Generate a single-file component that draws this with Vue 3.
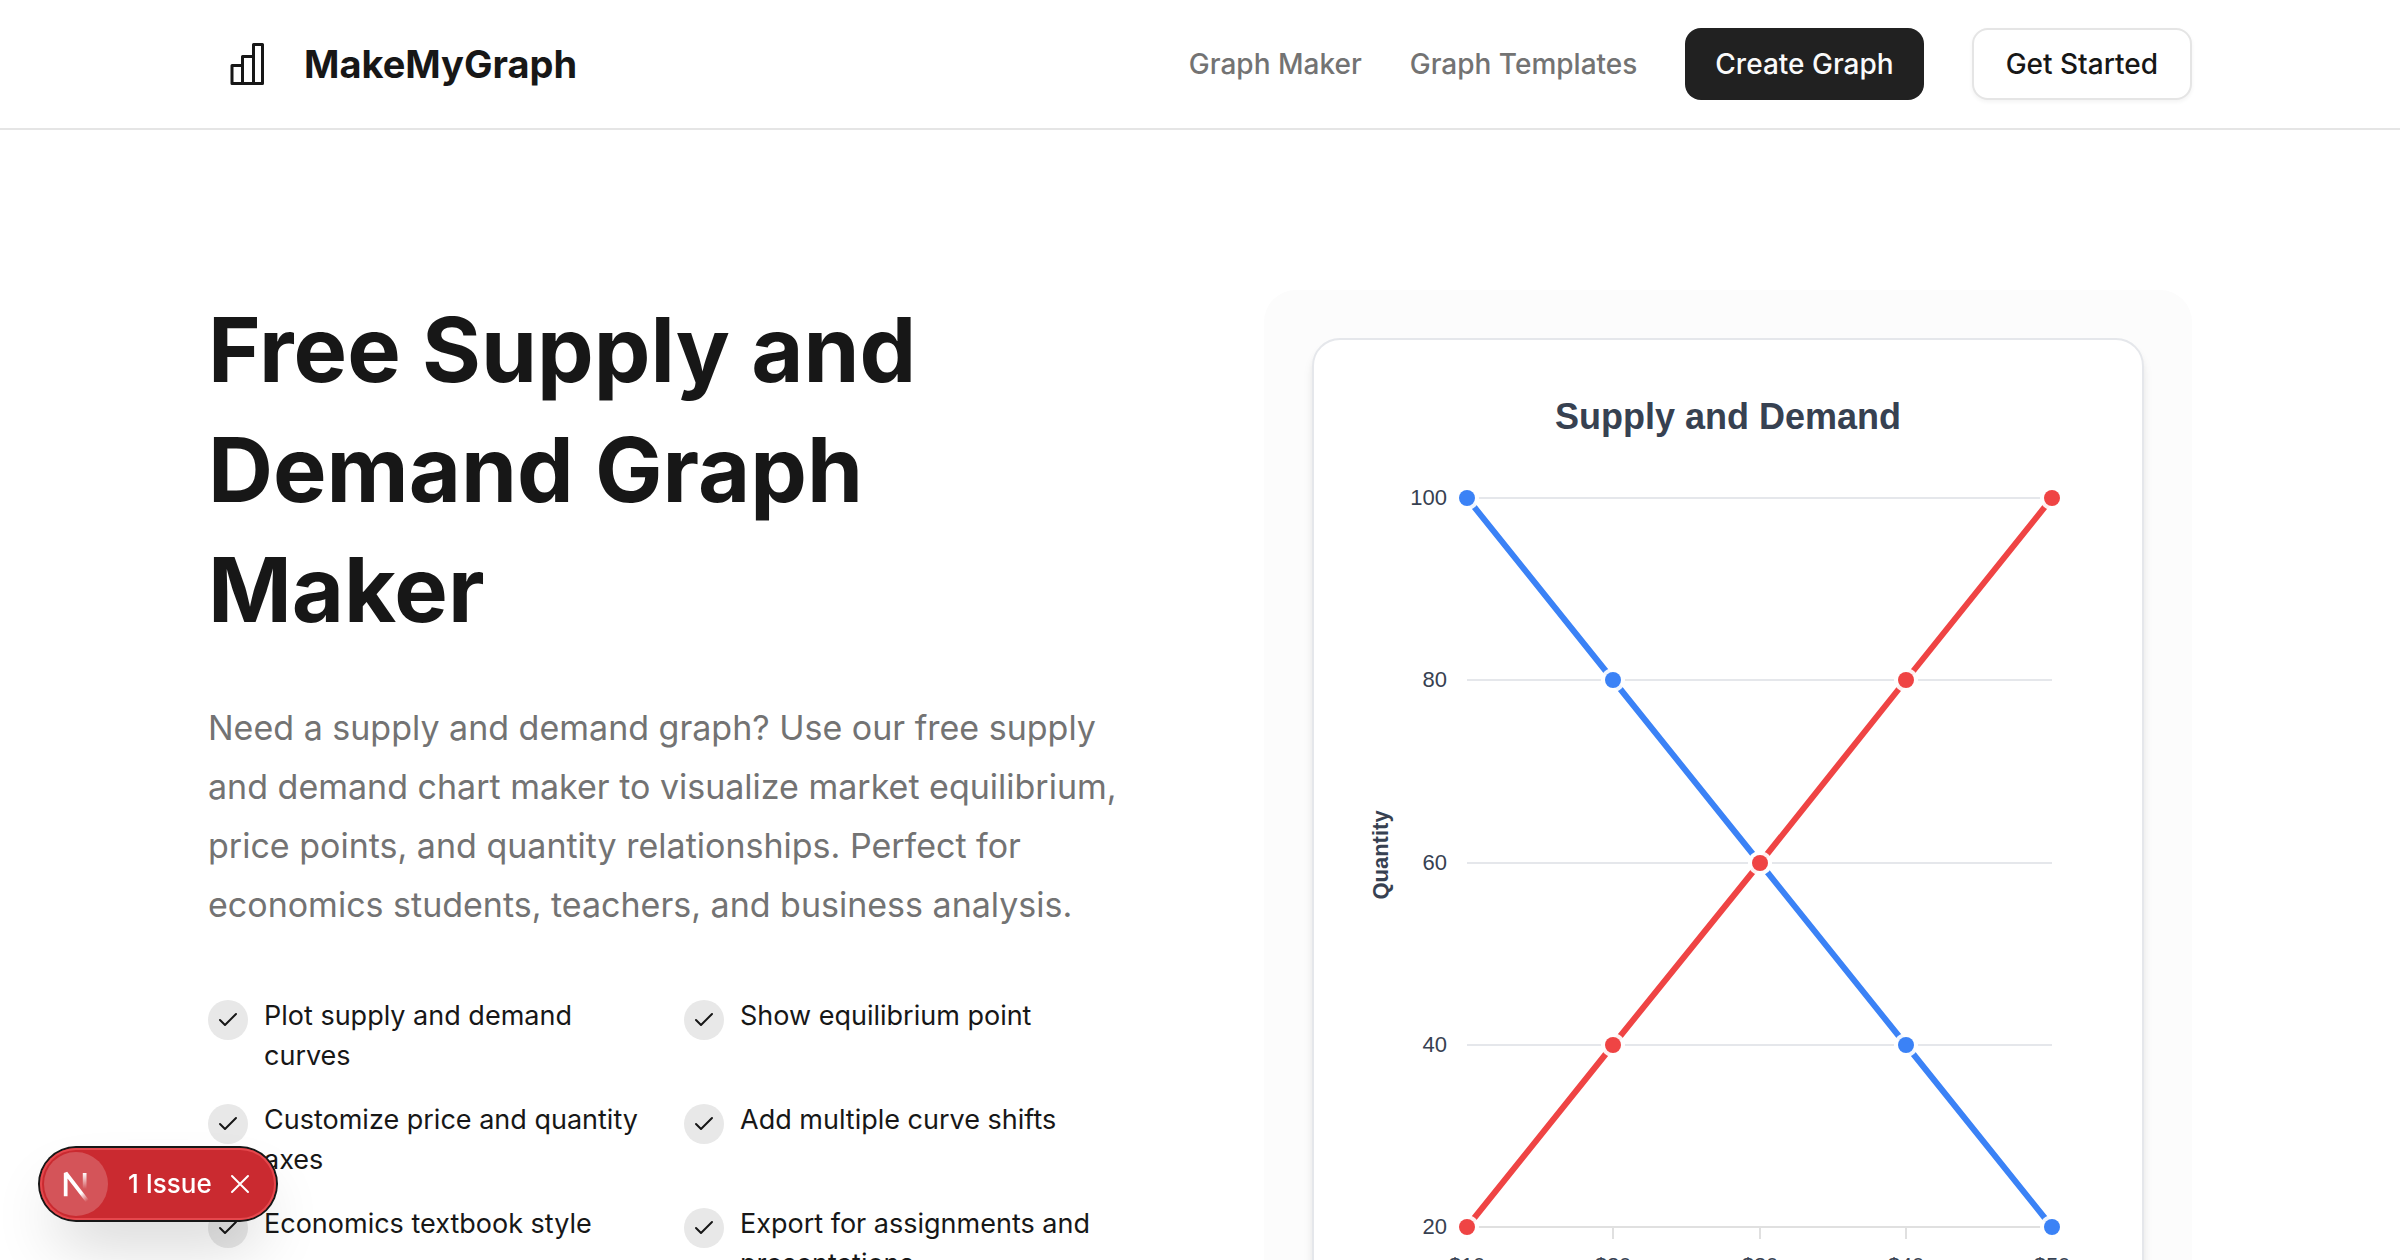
<!-- App.vue -->
<template>
  <div class="page">
    <header class="site-header">
      <div class="container header-inner">
        <a href="#" class="brand">
          <span class="brand-icon">
            <svg width="80" height="64" viewBox="0 0 80 64" fill="none" stroke="currentColor" stroke-width="3" stroke-linejoin="round">
              <path d="M24 33.5H34.5V51.5H24Z" />
              <path d="M34.5 24.5H45.5V51.5H34.5Z" />
              <path d="M45.5 12.5H54.5V51.5H45.5Z" />
            </svg>
          </span>
          <span class="brand-name">MakeMyGraph</span>
        </a>
        <nav class="nav">
          <a href="#" class="nav-link">Graph Maker</a>
          <a href="#" class="nav-link">Graph Templates</a>
          <button type="button" class="btn btn-primary">Create Graph</button>
          <button type="button" class="btn btn-outline">Get Started</button>
        </nav>
      </div>
    </header>

    <main class="container hero">
      <section class="hero-text">
        <h1>Free Supply and Demand Graph Maker</h1>
        <p class="lead">
          Need a supply and demand graph? Use our free supply and demand chart maker to visualize
          market equilibrium, price points, and quantity relationships. Perfect for economics
          students, teachers, and business analysis.
        </p>
        <ul class="features">
          <li v-for="item in features" :key="item">
            <span class="check">
              <svg width="24" height="24" viewBox="0 0 24 24" fill="none" stroke="currentColor" stroke-width="2" stroke-linecap="round" stroke-linejoin="round">
                <path d="M20 6 9 17l-5-5" />
              </svg>
            </span>
            <span class="feature-label">{{ item }}</span>
          </li>
        </ul>
      </section>

      <section class="preview">
        <div class="chart-card">
          <svg class="chart" viewBox="0 0 828 1000" role="img" aria-label="Supply and Demand">
            <text class="chart-title" x="414" y="89" text-anchor="middle">Supply and Demand</text>
            <text class="axis-title" transform="translate(74 515) rotate(-90)" text-anchor="middle">Quantity</text>

            <!-- 网格与Y轴 -->
            <g v-for="v in yTicks" :key="'y' + v">
              <line class="grid" :class="{ base: v === 20 }" :x1="xs[0]" :x2="xs[4]" :y1="yPos(v)" :y2="yPos(v)" />
              <text class="tick" x="133" :y="yPos(v) + 7" text-anchor="end">{{ v }}</text>
            </g>

            <!-- X轴 -->
            <g v-for="(x, i) in xs" :key="'x' + i">
              <line class="grid base" :x1="x" :x2="x" y1="888" y2="899" />
              <text class="tick" :x="x" y="933" text-anchor="middle">{{ prices[i] }}</text>
            </g>

            <g v-for="s in series" :key="s.name">
              <polyline :points="linePoints(s)" :stroke="s.color" fill="none" stroke-width="6" />
              <g v-for="(v, i) in s.values" :key="i">
                <circle :cx="xs[i]" :cy="yPos(v)" r="12" class="halo" />
                <circle :cx="xs[i]" :cy="yPos(v)" r="8" :fill="s.color" />
              </g>
            </g>
          </svg>
        </div>
      </section>
    </main>

    <div v-if="showIssue" class="issue-badge">
      <button type="button" class="issue-logo" aria-label="Next.js">
        <svg width="64" height="64" viewBox="0 0 32 32" fill="none">
          <g transform="translate(8.5 9.5)">
            <path d="M13.3 15.2 2.34 1V12.6" stroke="url(#fade-a)" stroke-width="1.86" stroke-linejoin="bevel" />
            <path d="M11.825 1V12.6" stroke="url(#fade-b)" stroke-width="1.86" />
          </g>
          <defs>
            <linearGradient id="fade-a" gradientUnits="userSpaceOnUse" x1="9.95" y1="11.1" x2="13.2" y2="15">
              <stop stop-color="#fff" />
              <stop offset="1" stop-color="#fff" stop-opacity="0" />
            </linearGradient>
            <linearGradient id="fade-b" gradientUnits="userSpaceOnUse" x1="11.8" y1="1" x2="11.8" y2="9">
              <stop stop-color="#fff" />
              <stop offset="1" stop-color="#fff" stop-opacity="0" />
            </linearGradient>
          </defs>
        </svg>
      </button>
      <button type="button" class="issue-text">1 Issue</button>
      <button type="button" class="issue-close" aria-label="Close" @click="showIssue = false">
        <svg width="20" height="20" viewBox="0 0 20 20" fill="none" stroke="currentColor" stroke-width="2" stroke-linecap="round">
          <path d="M2 2 18 18M18 2 2 18" />
        </svg>
      </button>
    </div>
  </div>
</template>

<script setup>
import { ref } from 'vue'

const showIssue = ref(true)

const features = [
  'Plot supply and demand curves',
  'Show equilibrium point',
  'Customize price and quantity axes',
  'Add multiple curve shifts',
  'Economics textbook style',
  'Export for assignments and presentations'
]

// 图表数据
const prices = ['$10', '$20', '$30', '$40', '$50']
const yTicks = [100, 80, 60, 40, 20]
const series = [
  { name: 'Demand', color: '#3b82f6', values: [100, 80, 60, 40, 20] },
  { name: 'Supply', color: '#ef4444', values: [20, 40, 60, 80, 100] }
]

// 坐标换算
const xs = [153, 299, 446, 592, 738]
const yPos = (v) => Math.round(158 + ((100 - v) / 80) * 729)
const linePoints = (s) => s.values.map((v, i) => `${xs[i]},${yPos(v)}`).join(' ')
</script>

<style>
body {
  margin: 0;
  background: #fff;
}
</style>

<style scoped>
.page {
  height: 100vh;
  overflow: hidden;
  background: #fff;
  color: #171717;
  font-family: Inter, "Liberation Sans", sans-serif;
}

.container {
  max-width: 1984px;
  margin: 0 auto;
}

button {
  font-family: inherit;
  cursor: pointer;
}

.site-header {
  border-bottom: 2px solid #e5e5e5;
}

.header-inner {
  height: 128px;
  display: flex;
  align-items: center;
  justify-content: space-between;
}

.brand {
  display: flex;
  align-items: center;
  gap: 16px;
  color: inherit;
  text-decoration: none;
}

.brand-icon {
  display: flex;
}

.brand-name {
  font-size: 38px;
  line-height: 56px;
  font-weight: 700;
}

.nav {
  display: flex;
  align-items: center;
  gap: 48px;
}

.nav-link {
  font-size: 28px;
  line-height: 40px;
  font-weight: 500;
  color: #737373;
  text-decoration: none;
}

.btn {
  height: 72px;
  padding: 0 30px;
  border: none;
  border-radius: 16px;
  font-size: 28px;
  line-height: 40px;
  font-weight: 500;
}

.btn-primary {
  background: #212121;
  color: #fafafa;
}

.btn-outline {
  padding: 0 32px;
  background: #fff;
  color: #171717;
  border: 2px solid #e5e5e5;
  box-shadow: 0 2px 4px rgba(0, 0, 0, 0.05);
}

.hero {
  padding-top: 160px;
  display: grid;
  grid-template-columns: 1fr 1fr;
  gap: 128px;
}

h1 {
  margin: 0;
  font-size: 90px;
  line-height: 120px;
  font-weight: 700;
}

.lead {
  margin: 48px 0 62px;
  font-size: 34px;
  line-height: 59px;
  color: #737373;
}

.features {
  margin: 0;
  padding: 0;
  list-style: none;
  display: grid;
  grid-template-columns: 1fr 1fr;
  gap: 24px;
}

.features li {
  display: flex;
  align-items: flex-start;
  gap: 16px;
}

.check {
  flex: none;
  width: 40px;
  height: 40px;
  margin-top: 4px;
  border-radius: 50%;
  background: #e8e8e8;
  display: flex;
  align-items: center;
  justify-content: center;
}

.feature-label {
  font-size: 27px;
  line-height: 40px;
}

.preview {
  padding: 48px;
  border-radius: 32px;
  background: #fcfcfc;
}

.chart-card {
  border: 2px solid #e5e7eb;
  border-radius: 28px;
  background: #fff;
  box-shadow: 0 8px 12px -2px rgba(0, 0, 0, 0.1), 0 4px 8px -4px rgba(0, 0, 0, 0.1);
}

.chart {
  display: block;
  width: 100%;
  font-family: "Liberation Sans", Arial, sans-serif;
  fill: #374151;
}

.chart-title {
  font-size: 36px;
  font-weight: 700;
}

.axis-title {
  font-size: 22px;
  font-weight: 700;
}

.tick {
  font-size: 22px;
}

.grid {
  stroke: #e5e7eb;
  stroke-width: 2;
}

.grid.base {
  stroke: #e0e0e0;
}

.halo {
  fill: #fff;
  fill-opacity: 0.92;
}

.issue-badge {
  position: fixed;
  left: 40px;
  bottom: 40px;
  height: 72px;
  padding: 0 26px 0 4px;
  box-sizing: border-box;
  display: flex;
  align-items: center;
  border-radius: 36px;
  background: #ca2a30;
  color: #fff;
  box-shadow: 0 0 0 2px #171717, inset 0 0 0 2px #e5484d, 0 32px 64px -16px rgba(0, 0, 0, 0.24);
}

.issue-badge button {
  padding: 0;
  border: none;
  background: none;
  color: inherit;
}

.issue-badge .issue-logo {
  display: flex;
  width: 64px;
  height: 64px;
  border-radius: 50%;
  background: rgba(255, 255, 255, 0.2);
}

.issue-badge .issue-text {
  margin: 0 18px 0 20px;
  font-size: 26px;
  line-height: 36px;
  font-weight: 500;
}

.issue-close {
  display: flex;
}
</style>
